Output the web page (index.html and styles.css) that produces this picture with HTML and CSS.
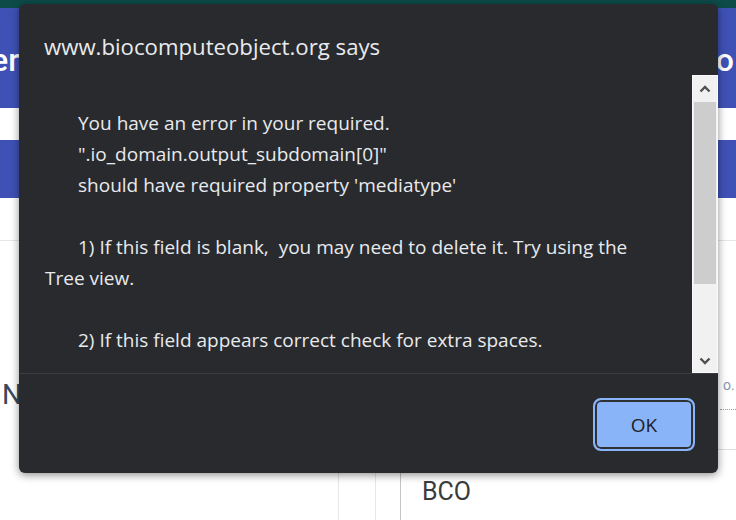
FILE: index.html
```html
<!DOCTYPE html>
<html>
<head>
<meta charset="utf-8">
<link rel="stylesheet" href="styles.css">
</head>
<body>
<div class="page">
  <div class="topbar"></div>
  <div class="appbar"><span class="ab-left">er</span><span class="ab-right">o</span></div>
  <div class="gap"></div>
  <div class="toolbar"></div>
  <div class="content">
    <div class="row1"></div>
    <div class="row2">
      <span class="n">N</span>
      <div class="side">
        <div class="side-text">o.</div>
        <div class="dots"></div>
      </div>
    </div>
    <div class="row3">
      <div class="col"></div>
      <div class="col bl"></div>
      <div class="col bl"></div>
      <div class="col bl2"><span class="bco">BCO</span></div>
    </div>
  </div>
</div>

<div class="dialog">
  <div class="dlg-title">www.biocomputeobject.org says</div>
  <div class="dlg-body">
    <div class="msg">
      <div class="ln"></div>
      <div class="ln ind">You have an error in your required. </div>
      <div class="ln ind">".io_domain.output_subdomain[0]" </div>
      <div class="ln ind">should have required property 'mediatype'</div>
      <div class="ln"></div>
      <div class="ln ind">1) If this field is blank,  you may need to delete it. Try using the Tree view.</div>
      <div class="ln"></div>
      <div class="ln ind">2) If this field appears correct check for extra spaces.</div>
      <div class="ln"></div>
    </div>
    <div class="sb">
      <div class="sb-btn up">
        <svg width="12" height="8" viewBox="0 0 12 8"><path d="M1.5 6.5 L6 2 L10.5 6.5" fill="none" stroke="#505050" stroke-width="2.4"/></svg>
      </div>
      <div class="sb-thumb"></div>
      <div class="sb-track"></div>
      <div class="sb-btn down">
        <svg width="12" height="8" viewBox="0 0 12 8"><path d="M1.5 1.5 L6 6 L10.5 1.5" fill="none" stroke="#505050" stroke-width="2.4"/></svg>
      </div>
    </div>
  </div>
  <div class="dlg-foot">
    <button class="ok">OK</button>
  </div>
</div>
</body>
</html>
```

FILE: styles.css
```css
html, body {
  margin: 0;
  padding: 0;
  background: #ffffff;
}
body {
  width: 736px;
  height: 520px;
  overflow: hidden;
  position: relative;
  font-family: Roboto, "Liberation Sans", sans-serif;
}
.page {
  display: flex;
  flex-direction: column;
  height: 520px;
}
.topbar {
  height: 8px;
  background: #0d4b49;
}
.appbar {
  height: 100px;
  background: #3f51b5;
  color: #ffffff;
  display: flex;
  justify-content: space-between;
  align-items: center;
  font-size: 32px;
  font-weight: 500;
  overflow: hidden;
  padding-top: 4px;
  box-sizing: border-box;
}
.ab-left {
  margin-left: -9px;
}
.ab-right {
  margin-right: 2px;
}
.gap {
  height: 32px;
}
.toolbar {
  height: 58px;
  background: #3f51b5;
}
.content {
  flex: 1;
  display: flex;
  flex-direction: column;
}
.row1 {
  height: 42px;
  border-bottom: 1px solid #e6e6e6;
}
.row2 {
  height: 208px;
  display: flex;
  justify-content: space-between;
  align-items: flex-start;
}
.n {
  margin-top: 138px;
  margin-left: 2px;
  font-size: 28px;
  line-height: 32px;
  color: #34495e;
}
.side {
  width: 16px;
  margin-top: 135px;
}
.side-text {
  font-size: 14px;
  line-height: 18px;
  color: #8796b0;
  padding-left: 3px;
}
.dots {
  height: 15px;
  border-bottom: 1px dotted #9a9a9a;
}
.row3 {
  flex: 1;
  display: grid;
  grid-template-columns: 338px 37px 25px 1fr;
}
.bl {
  border-left: 1px solid #e6e6e6;
}
.bl2 {
  border-left: 1px solid #c4c4c4;
  border-top: 1px solid #dedede;
  padding: 27px 0 0 21px;
}
.bco {
  font-size: 25px;
  line-height: 30px;
  color: #3b3b3b;
}

/* dialog */
.dialog {
  position: absolute;
  left: 19px;
  top: 4px;
  width: 699px;
  height: 469px;
  background: #292a2d;
  border-radius: 6px;
  box-shadow: 0 2px 8px rgba(0, 0, 0, 0.45);
  display: flex;
  flex-direction: column;
  color: #e8eaed;
  font-family: "Open Sans", "Noto Sans", sans-serif;
  overflow: hidden;
}
.dlg-title {
  padding: 28px 25px 0 25px;
  height: 30px;
  margin-bottom: 13px;
  font-size: 22.2px;
  line-height: 30px;
}
.dlg-body {
  height: 298px;
  display: flex;
}
.msg {
  flex: 1;
  padding: 2px 45px 0 26px;
  overflow: hidden;
  font-size: 19px;
  line-height: 31px;
}
.ln {
  min-height: 31px;
  white-space: pre-wrap;
}
.ind {
  text-indent: 33px;
}
.sb {
  width: 26px;
  box-sizing: border-box;
  background: #f1f1f1;
  border: 1px solid #fafafa;
  display: flex;
  flex-direction: column;
}
.sb-btn {
  display: flex;
  align-items: center;
  justify-content: center;
}
.sb-btn.up {
  height: 26px;
}
.sb-btn.down {
  height: 23px;
}
.sb-thumb {
  height: 182px;
  margin: 0 1px;
  background: #cdcdcd;
}
.sb-track {
  flex: 1;
}
.dlg-foot {
  flex: 1;
  border-top: 1px solid #3c3d40;
  display: flex;
  justify-content: flex-end;
  align-items: flex-start;
  padding: 24px 23px 0 0;
}
.ok {
  width: 102px;
  height: 53px;
  box-sizing: border-box;
  background: #8ab4f8;
  border: 2px solid #8ab4f8;
  box-shadow: inset 0 0 0 2px #303134;
  border-radius: 8px;
  color: #202124;
  font-family: "Open Sans", "Noto Sans", sans-serif;
  font-size: 19px;
  padding: 0;
}
```
